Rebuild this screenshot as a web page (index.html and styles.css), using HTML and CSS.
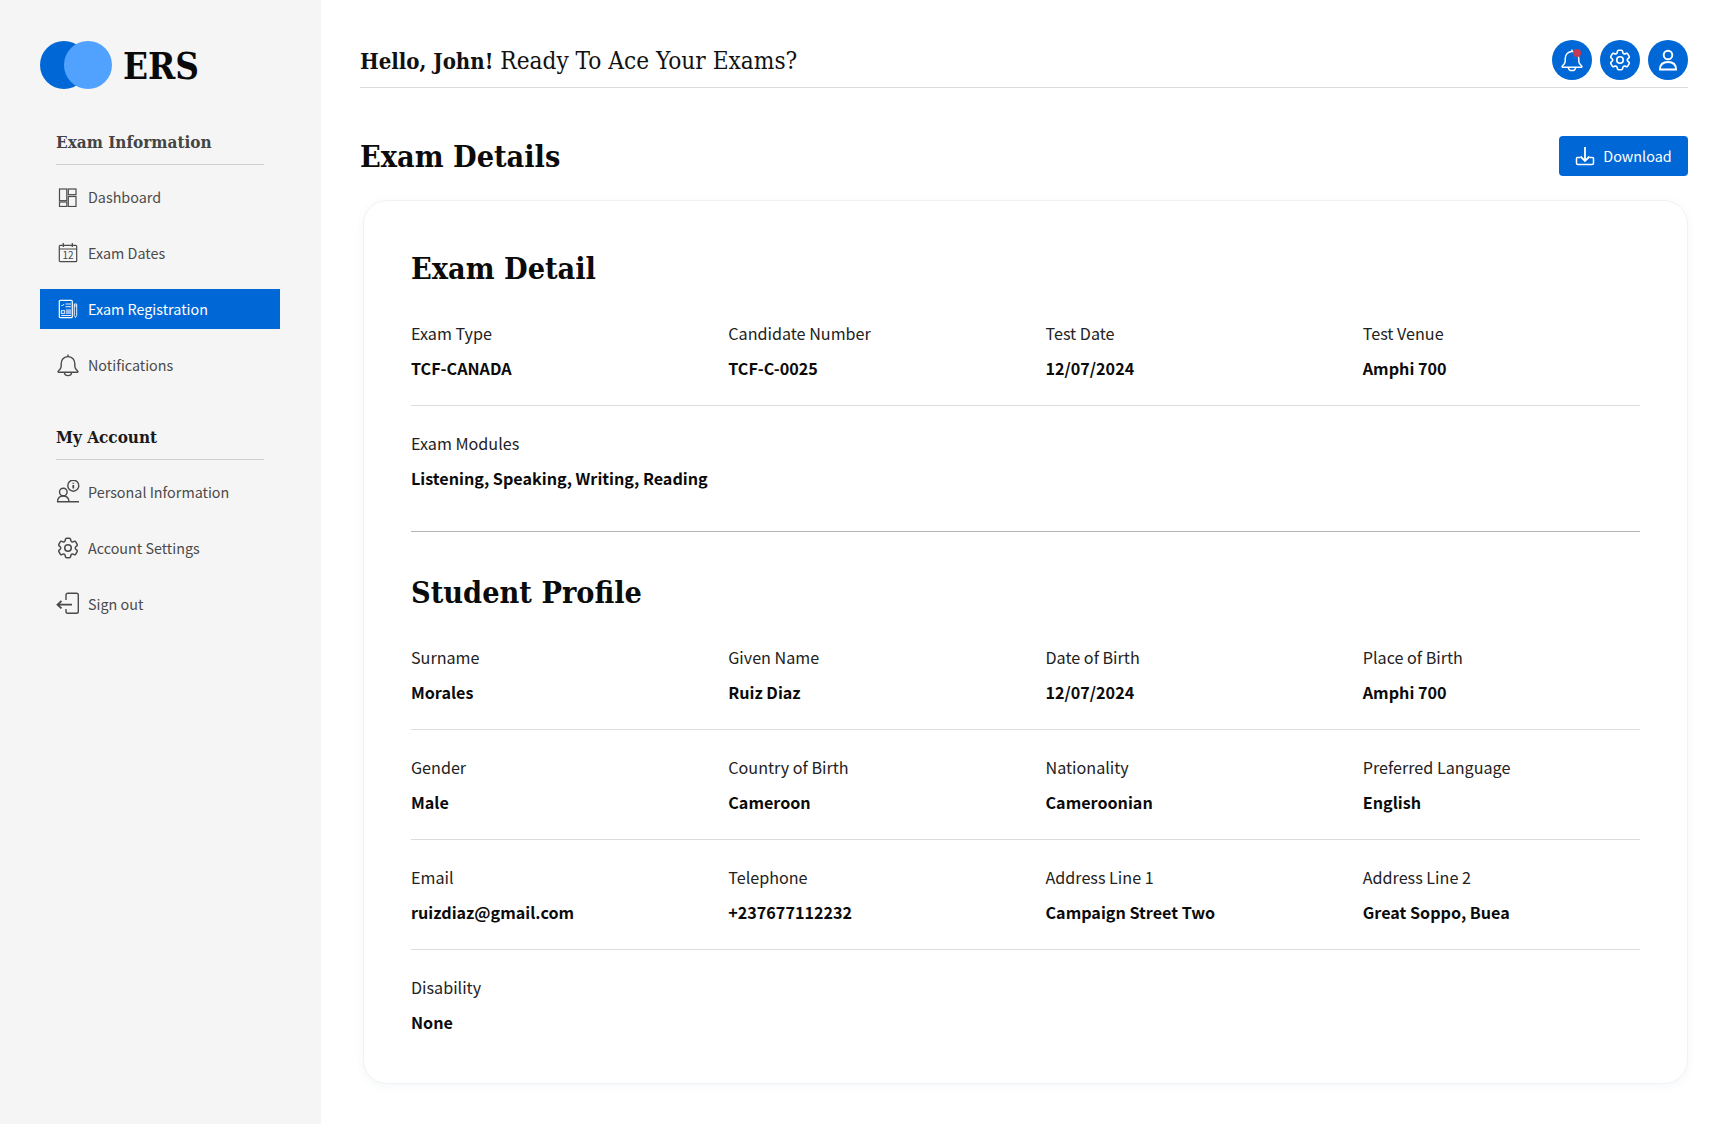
FILE: index.html
```html
<!DOCTYPE html>
<html lang="en">
<head>
<meta charset="utf-8">
<title>Exam Details</title>
<link rel="stylesheet" href="styles.css">
</head>
<body>
<svg class="defs" width="0" height="0" aria-hidden="true">
  <symbol id="gear" viewBox="0 0 24 24">
    <path d="M9.594 3.94c.09-.542.56-.94 1.11-.94h2.593c.55 0 1.02.398 1.11.94l.213 1.281c.063.374.313.686.645.87.074.04.147.083.22.127.325.196.72.257 1.075.124l1.217-.456a1.125 1.125 0 0 1 1.37.49l1.296 2.247a1.125 1.125 0 0 1-.26 1.431l-1.003.827c-.293.241-.438.613-.43.992a7.723 7.723 0 0 1 0 .255c-.008.378.137.75.43.991l1.004.827c.424.35.534.955.26 1.43l-1.298 2.247a1.125 1.125 0 0 1-1.369.491l-1.217-.456c-.355-.133-.75-.072-1.076.124a6.47 6.47 0 0 1-.22.128c-.331.183-.581.495-.644.869l-.213 1.281c-.09.543-.56.94-1.11.94h-2.594c-.55 0-1.019-.398-1.11-.94l-.213-1.281c-.062-.374-.312-.686-.644-.87a6.52 6.52 0 0 1-.22-.127c-.325-.196-.72-.257-1.076-.124l-1.217.456a1.125 1.125 0 0 1-1.369-.49l-1.297-2.247a1.125 1.125 0 0 1 .26-1.431l1.004-.827c.292-.24.437-.613.43-.991a6.932 6.932 0 0 1 0-.255c.007-.38-.138-.751-.43-.992l-1.004-.827a1.125 1.125 0 0 1-.26-1.43l1.297-2.247a1.125 1.125 0 0 1 1.37-.491l1.216.456c.356.133.751.072 1.076-.124.072-.044.146-.086.22-.128.332-.183.582-.495.644-.869l.214-1.28Z"/>
    <circle cx="12" cy="12" r="3"/>
  </symbol>
  <symbol id="bell" viewBox="0 0 24 24">
    <path d="M12 1.500v2.100"/>
    <path d="M12 3.600c-3.800 0-6.800 3-6.800 6.800v3c0 1.600-1.100 3-2.900 4.600-.5.400-.2 1.200.4 1.200h18.600c.6 0 .9-.8.4-1.200-1.800-1.600-2.900-3-2.900-4.600v-3c0-3.800-3-6.800-6.800-6.800Z"/>
    <path d="M8.400 19.200c0 2 1.600 3.400 3.600 3.400s3.600-1.400 3.600-3.400"/>
  </symbol>
</svg>

<div class="app">
  <aside class="sidebar">
    <div class="brand">
      <span class="brand-mark"><span class="dot-dark"></span><span class="dot-light"></span></span>
      <span class="brand-name">ERS</span>
    </div>

    <h2 class="nav-title nav-title-muted">Exam Information</h2>
    <nav class="nav">
      <a class="nav-item">
        <svg class="nav-icon" viewBox="0 0 20 20"><rect x="1.500" y="2" width="7.300" height="11.700"/><rect x="10.300" y="2" width="7.700" height="5.700"/><rect x="1.500" y="15" width="7.300" height="4.500"/><rect x="10.300" y="9.500" width="7.700" height="10"/></svg>
        <span class="nav-text">Dashboard</span>
      </a>
      <a class="nav-item">
        <svg class="nav-icon" viewBox="0 0 20 20"><rect x="1.300" y="2.300" width="17.400" height="16.400" rx="1"/><path d="M1.300 6h17.400M5.300 0v4M14.300 0v4"/><text class="cal-num" x="10" y="16.300">12</text></svg>
        <span class="nav-text">Exam Dates</span>
      </a>
      <a class="nav-item is-active">
        <svg class="nav-icon" viewBox="0 0 20 20"><rect x="1.300" y="1.300" width="13" height="17.400" rx="1"/><path d="M3.300 6l1 1 1.700-2M7.500 5H13M7.500 7.700H13" class="thin"/><rect x="3.300" y="11.700" width="3.400" height="2.600" class="thin"/><rect x="8" y="10.300" width="5" height="4.700" class="solid"/><path d="M3.300 16.500H13" class="thin"/><path d="M16.300 5h2.400v11.500l-1.200 2-1.200-2zM16.300 7h2.400" class="thin"/></svg>
        <span class="nav-text">Exam Registration</span>
      </a>
      <a class="nav-item">
        <svg class="nav-icon nav-icon-lg"><use href="#bell"/></svg>
        <span class="nav-text">Notifications</span>
      </a>
    </nav>

    <h2 class="nav-title nav-title-second">My Account</h2>
    <nav class="nav">
      <a class="nav-item">
        <svg class="nav-icon nav-icon-lg" viewBox="1 0 24 24"><circle cx="18.300" cy="5.700" r="5.500"/><path d="M18.300 2.800v1M18.300 5v3.500" class="thick"/><circle cx="8.300" cy="12" r="3.800"/><path d="M2.500 22c0-3.800 2.400-6 5.800-6 2.300 0 4.100 1 5 2.700.4.800.6 2 .6 3.300M2 21.700h22"/></svg>
        <span class="nav-text">Personal Information</span>
      </a>
      <a class="nav-item">
        <svg class="nav-icon nav-icon-gear"><use href="#gear"/></svg>
        <span class="nav-text">Account Settings</span>
      </a>
      <a class="nav-item">
        <svg class="nav-icon nav-icon-lg" viewBox="1 0 24 24"><path d="M11 8V3c0-1 .8-1.800 1.800-1.800h8.700c1 0 1.800.8 1.800 1.800v16.500c0 1-.8 1.800-1.800 1.800h-8.700c-1 0-1.800-.8-1.800-1.800v-2.500"/><path d="M2.500 12.700H17M6.500 9l-4 3.700 4 3.700" class="thick"/></svg>
        <span class="nav-text">Sign out</span>
      </a>
    </nav>
  </aside>

  <main class="main">
    <header class="topbar">
      <p class="greeting"><strong>Hello, John!</strong> Ready To Ace Your Exams?</p>
      <div class="top-actions">
        <button class="round-btn"><svg class="round-icon"><use href="#bell"/></svg><span class="badge"></span></button>
        <button class="round-btn"><svg class="round-icon round-icon-gear"><use href="#gear"/></svg></button>
        <button class="round-btn"><svg class="round-icon round-icon-user" viewBox="0 0 24 24"><circle cx="12" cy="7" r="4.300"/><path d="M4 21.500c0-5 3.300-7.500 8-7.500s8 2.500 8 7.500z"/></svg></button>
      </div>
    </header>

    <div class="page-head">
      <h1 class="page-title">Exam Details</h1>
      <button class="download">
        <svg class="download-icon" viewBox="0 0 20 20"><path d="M10 1v14M5.500 10.500l4.500 4.500 4.500-4.500" class="thick"/><path d="M5 11.500H2.500c-.6 0-1 .4-1 1v4.500c0 .9.600 1.500 1.500 1.500h14c.9 0 1.500-.6 1.500-1.500v-4.500c0-.6-.4-1-1-1H15"/></svg>
        Download
      </button>
    </div>

    <section class="card">
      <h2 class="section-title">Exam Detail</h2>
      <div class="grid">
        <div class="field"><span class="label">Exam Type</span><span class="value">TCF-CANADA</span></div>
        <div class="field"><span class="label">Candidate Number</span><span class="value">TCF-C-0025</span></div>
        <div class="field"><span class="label">Test Date</span><span class="value">12/07/2024</span></div>
        <div class="field"><span class="label">Test Venue</span><span class="value">Amphi 700</span></div>
      </div>
      <div class="grid grid-last">
        <div class="field field-wide"><span class="label">Exam Modules</span><span class="value">Listening, Speaking, Writing, Reading</span></div>
      </div>

      <h2 class="section-title section-title-next">Student Profile</h2>
      <div class="grid">
        <div class="field"><span class="label">Surname</span><span class="value">Morales</span></div>
        <div class="field"><span class="label">Given Name</span><span class="value">Ruiz Diaz</span></div>
        <div class="field"><span class="label">Date of Birth</span><span class="value">12/07/2024</span></div>
        <div class="field"><span class="label">Place of Birth</span><span class="value">Amphi 700</span></div>
      </div>
      <div class="grid">
        <div class="field"><span class="label">Gender</span><span class="value">Male</span></div>
        <div class="field"><span class="label">Country of Birth</span><span class="value">Cameroon</span></div>
        <div class="field"><span class="label">Nationality</span><span class="value">Cameroonian</span></div>
        <div class="field"><span class="label">Preferred Language</span><span class="value">English</span></div>
      </div>
      <div class="grid">
        <div class="field"><span class="label">Email</span><span class="value">ruizdiaz@gmail.com</span></div>
        <div class="field"><span class="label">Telephone</span><span class="value">+237677112232</span></div>
        <div class="field"><span class="label">Address Line 1</span><span class="value">Campaign Street Two</span></div>
        <div class="field"><span class="label">Address Line 2</span><span class="value">Great Soppo, Buea</span></div>
      </div>
      <div class="grid grid-end">
        <div class="field field-wide"><span class="label">Disability</span><span class="value">None</span></div>
      </div>
    </section>
  </main>
</div>
</body>
</html>
```

FILE: styles.css
```css
* { box-sizing: border-box; }
html, body { margin: 0; height: 100%; }
body {
  font-family: "Noto Sans CJK SC", "Noto Sans", sans-serif;
  background: #fff;
  color: #0b0b0b;
  overflow: hidden;
}
.defs { position: absolute; }
.app { display: flex; height: 1124px; }

.sidebar {
  width: 321px;
  flex: none;
  background: #f5f5f5;
  padding: 41px 41px 0 40px;
}
.brand { display: flex; align-items: center; gap: 11px; height: 48px; margin-bottom: 38px; }
.brand-mark { position: relative; width: 72px; height: 48px; display: block; }
.dot-dark, .dot-light { position: absolute; top: 0; width: 48px; height: 48px; border-radius: 50%; }
.dot-dark { left: 0; background: #0068d6; }
.dot-light { left: 24px; background: #51a2ff; }
.brand-name { height: 48px; padding-top: 2px; font-family: "DejaVu Serif Condensed", "Liberation Serif", serif; font-weight: 700; font-size: 36.500px; line-height: 48px; color: #0a0a0a; }

.nav-title {
  margin: 0 16px;
  height: 38px;
  padding-top: 1px;
  font-family: "DejaVu Serif Condensed", "Liberation Serif", serif;
  font-size: 17px;
  font-weight: 700;
  line-height: 28px;
  border-bottom: 1px solid #cfcfcf;
}
.nav-title-muted { color: #444; }
.nav-title-second { color: #1a1a1a; margin-top: 37px; }
.nav { display: flex; flex-direction: column; gap: 16px; margin-top: 12px; }
.nav-item {
  height: 40px;
  display: flex;
  align-items: center;
  gap: 10px;
  padding-left: 18px;
  font-size: 14.350px;
  color: #4a4a4a;
}
.nav-text { margin-bottom: 2px; }
.nav-item.is-active { background: #0068d6; color: #fff; }
.nav-icon {
  width: 20px;
  height: 20px;
  flex: none;
  fill: none;
  stroke: #4a4a4a;
  stroke-width: 1.200;
}
.nav-icon-lg { width: 24px; height: 24px; margin: 0 -2px; stroke-width: 1.400; }
.nav-icon-gear { width: 26px; height: 26px; margin: 0 -3px; stroke-width: 1.400; }
.nav-icon .thin { stroke-width: .9; }
.nav-icon .thick { stroke-width: 1.800; }
.nav-icon .solid { fill: #8fbdf2; stroke: none; }
.cal-num { font-size: 10px; text-anchor: middle; fill: #4a4a4a; stroke: none; font-family: "Noto Sans CJK SC", sans-serif; }
.is-active .nav-icon { stroke: #fff; }

.main { flex: 1; min-width: 0; padding: 40px 40px 0 39px; }
.topbar {
  display: flex;
  align-items: center;
  justify-content: space-between;
  height: 48px;
  padding-bottom: 8px;
  border-bottom: 1px solid #dcdcdc;
}
.greeting { margin: 0; padding-top: 2px; font-family: "DejaVu Serif Condensed", "Liberation Serif", serif; font-size: 24.200px; line-height: 40px; color: #111; }
.greeting strong { font-weight: 700; font-size: 22px; }
.top-actions { display: flex; gap: 8px; }
.round-btn {
  position: relative;
  width: 40px;
  height: 40px;
  border: 0;
  padding: 0;
  border-radius: 50%;
  background: #0068d6;
  display: flex;
  align-items: center;
  justify-content: center;
}
.round-icon { width: 24px; height: 24px; fill: none; stroke: #fff; stroke-width: 1.500; }
.round-icon-gear { width: 26px; height: 26px; }
.round-icon-user { stroke-width: 1.900; }
.badge { position: absolute; top: 9px; left: 21px; width: 8px; height: 8px; border-radius: 50%; background: #c33a52; }

.page-head { display: flex; align-items: center; justify-content: space-between; height: 40px; margin-top: 48px; }
.page-title { margin: 0; height: 40px; padding-top: 1px; font-family: "DejaVu Serif Condensed", "Liberation Serif", serif; font-size: 30.300px; font-weight: 700; line-height: 40px; }
.download {
  height: 40px;
  width: 129px;
  border: 0;
  border-radius: 4px;
  background: #0068d6;
  color: #fff;
  font: 14.350px/24px "Noto Sans CJK SC", sans-serif;
  display: flex;
  align-items: center;
  justify-content: center;
  gap: 8px;
  padding: 0;
}
.download-icon { width: 20px; height: 20px; fill: none; stroke: #fff; stroke-width: 1.500; }
.download-icon .thick { stroke-width: 1.800; }

.card {
  margin: 24px 0 0 3px;
  height: 884px;
  padding: 47px 47px 0;
  border: 1px solid #f1f2f4;
  border-radius: 24px;
  box-shadow: 0 2px 10px rgba(40, 70, 120, .05);
  background: #fff;
}
.section-title { margin: 0; height: 40px; padding-top: 1px; font-family: "DejaVu Serif Condensed", "Liberation Serif", serif; font-size: 30.300px; font-weight: 700; line-height: 40px; }
.section-title-next { margin-top: 40px; padding-top: 1px; }
.grid {
  display: grid;
  grid-template-columns: repeat(4, minmax(0, 1fr));
  column-gap: 40px;
  padding-bottom: 25px;
  border-bottom: 1px solid #dcdcdc;
}
.section-title + .grid { margin-top: 33px; }
.grid + .grid { margin-top: 25px; }
.grid-last { border-bottom-color: #b4b4b4; padding-bottom: 41px; }
.grid-end { border-bottom: 0; }
.field { display: flex; flex-direction: column; gap: 11px; }
.field-wide { grid-column: 1 / -1; }
.label { font-size: 16.150px; line-height: 24px; color: #222; }
.value { font-size: 16.150px; line-height: 24px; font-weight: 700; color: #0b0b0b; }
```
